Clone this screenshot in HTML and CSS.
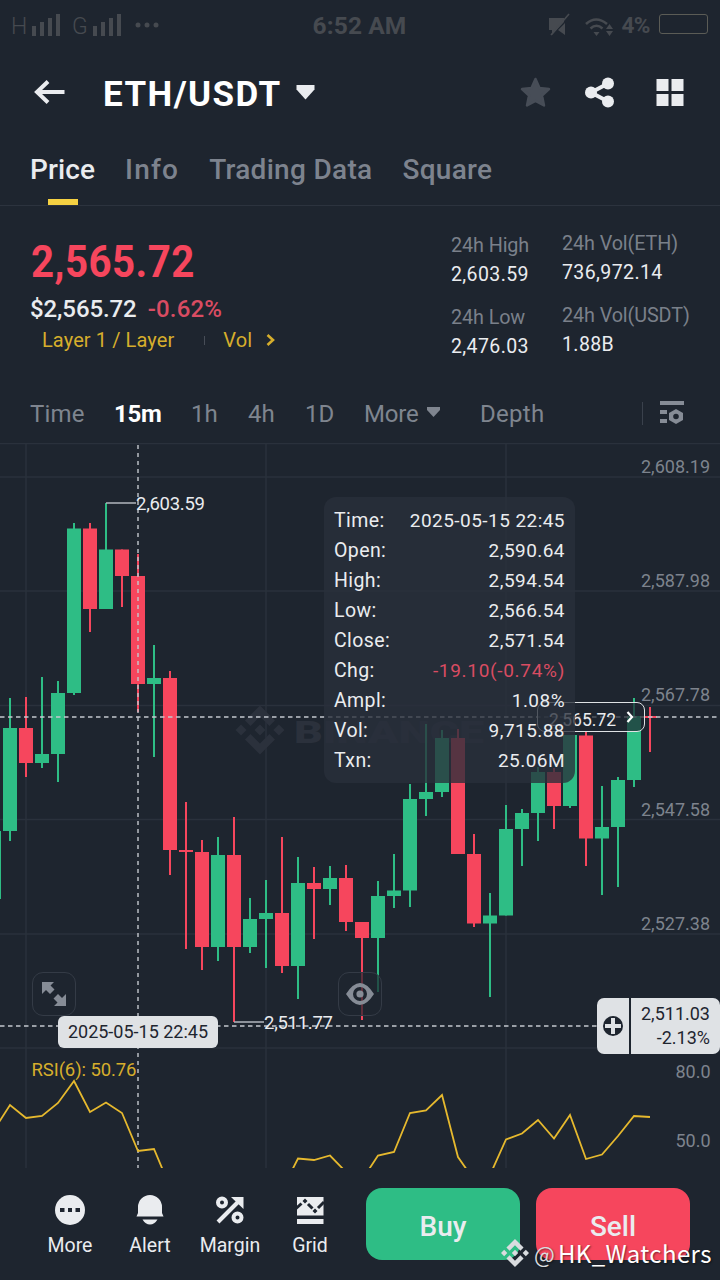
FILE: index.html
```
<!DOCTYPE html>
<html lang="en">
<head>
    <meta charset="UTF-8">
    <meta name="viewport" content="width=device-width, initial-scale=1.0">
    <title>ETH/USDT</title>
    <link rel="stylesheet" href="styles.css">
</head>
<body>
    <div class="status-bar">
        <div class="signals">
            <span class="net">H</span>
            <svg width="29" height="23" viewBox="0 0 29 23"><path d="M0 12h4v10H0zM8 8h4v14H8zM16 4h4v18h-4zM24 0h4v22h-4z"/></svg>
            <span class="net net-g">G</span>
            <svg width="29" height="23" viewBox="0 0 29 23"><path d="M0 12h4v10H0zM8 8h4v14H8zM16 4h4v18h-4zM24 0h4v22h-4z"/></svg>
            <svg class="dots" width="24" height="6" viewBox="0 0 24 6"><circle cx="3" cy="3" r="2.5"/><circle cx="12" cy="3" r="2.5"/><circle cx="21" cy="3" r="2.5"/></svg>
        </div>
        <div class="clock">6:52 AM</div>
        <div class="battery-side">
            <svg width="22" height="24" viewBox="0 0 22 24"><path d="M1 5h15v4L4 22v-5H1zM17 10v12l-7-5z"/><path d="M3 22L21 1" stroke="#464a50" stroke-width="1.6"/></svg>
            <svg class="wifi" width="29" height="22" viewBox="0 0 29 22"><g fill="none" stroke="#464a50" stroke-width="2.6"><path d="M1 8q10-9 21 0M5.500 12.500q6-5.500 12 0"/></g><path d="M8.500 16h6l-3 4zM21 13l3.500-5 3.500 5zM21 15h7l-3.500 5z"/></svg>
            <span class="percent">4%</span>
            <span class="battery"></span>
        </div>
    </div>

    <header class="header">
        <svg width="31" height="24" viewBox="0 0 31 24"><path d="M14 1.500L3 12l11 10.500M3 12h27.500" fill="none" stroke="#eaecef" stroke-width="4"/></svg>
        <h1 class="pair">ETH/USDT</h1>
        <svg class="caret" width="19" height="15" viewBox="0 0 19 15"><path d="M.5 0h18v4.500L9.500 14.500.5 4.500z" fill="#eaecef"/></svg>
        <div class="actions">
            <svg width="31" height="31" viewBox="0 0 31 31"><path d="M15.500 2l4 9 9.500 1-7 6.500 2 10-8.500-4.500L7 28.500l2-10L2 12l9.500-1z" fill="#474d57" stroke="#474d57" stroke-width="2.500" stroke-linejoin="round"/></svg>
            <svg width="30" height="31" viewBox="0 0 30 31"><g fill="#eaecef"><circle cx="6" cy="15.500" r="6"/><circle cx="23" cy="6.500" r="6"/><circle cx="23" cy="24.500" r="6"/></g><path d="M23 6.500L6 15.500l17 9" fill="none" stroke="#eaecef" stroke-width="4"/></svg>
            <svg width="28" height="27" viewBox="0 0 28 27"><path d="M.5 0h12v12H.5zM15.500 0h12v12h-12zM.5 15h12v12H.5zM15.500 15h12v12h-12z" fill="#eaecef"/></svg>
        </div>
    </header>

    <nav class="tabs">
        <span class="tab active">Price</span>
        <span class="tab info">Info</span>
        <span class="tab">Trading Data</span>
        <span class="tab">Square</span>
    </nav>

    <section class="summary">
        <div class="price-side">
            <div class="last-price">2,565.72</div>
            <div class="fiat-row"><span>$2,565.72</span><span class="change">-0.62%</span></div>
            <div class="tags">
                <span>Layer 1 / Layer</span>
                <span class="tag-line"></span>
                <span>Vol</span>
                <svg width="9" height="14" viewBox="0 0 9 14"><path d="M1.500 2L7 7l-5.500 5" fill="none" stroke="#d6ae2c" stroke-width="2.600"/></svg>
            </div>
        </div>
        <div class="stats stats-range">
            <div class="stat"><span class="stat-name">24h High</span><span class="stat-value">2,603.59</span></div>
            <div class="stat"><span class="stat-name">24h Low</span><span class="stat-value">2,476.03</span></div>
        </div>
        <div class="stats stats-vol">
            <div class="stat"><span class="stat-name">24h Vol(ETH)</span><span class="stat-value">736,972.14</span></div>
            <div class="stat"><span class="stat-name">24h Vol(USDT)</span><span class="stat-value">1.88B</span></div>
        </div>
    </section>

    <div class="intervals">
        <span class="int-time">Time</span>
        <span class="int-15 selected">15m</span>
        <span class="int-1h">1h</span>
        <span class="int-4h">4h</span>
        <span class="int-1d">1D</span>
        <span class="int-more">More <svg width="13" height="10" viewBox="0 0 13 10"><path d="M0 0h13v3L6.500 10 0 3z" fill="#7f858f"/></svg></span>
        <span class="int-depth">Depth</span>
        <div class="chart-settings">
            <svg width="24" height="25" viewBox="0 0 24 25"><path d="M0 1h24v4H0zM0 10h7v4H0zM0 19h7v4H0z" fill="#868c96"/><path d="M16 9l7 4v7l-7 4-7-4v-7zm0 4.700a2.800 2.800 0 100 5.600 2.800 2.800 0 000-5.600z" fill="#868c96" fill-rule="evenodd"/></svg>
        </div>
    </div>

    <main class="chart">
        <svg class="plot" width="720" height="725" viewBox="0 443 720 725">
            <path class="grid" d="M0 443.500H720M0 477H720M0 591H720M0 705.500H720M0 819.500H720M0 934H720M0 1048H720M26 443V1168M266 443V1168M506 443V1168"/>
            <g class="brand">
                <path transform="translate(235.500 705.500) scale(2.040)" d="M16.624 13.920l2.717 2.715-7.353 7.353-7.353-7.352 2.717-2.716 4.636 4.659 4.636-4.659zm4.637-4.637L24 12l-2.715 2.716L18.568 12l2.693-2.716zm-9.272.001l2.716 2.691-2.716 2.717L9.272 12l2.716-2.715zm-9.272-.001L5.409 12l-2.691 2.692L0 12l2.716-2.716zM11.989.011l7.353 7.329-2.717 2.715-4.636-4.636-4.636 4.660-2.717-2.715z"/>
                <text x="294" y="743" textLength="190" lengthAdjust="spacingAndGlyphs">BINANCE</text>
            </g>
            <g id="candles"></g>
            <path class="guide" d="M106 503H136M234 1022H264"/>
            <path class="cross" d="M138 445V1168" stroke-dasharray="4 4"/>
            <path class="cross" d="M0 717H720M0 1026H597" stroke-dasharray="4.500 3.500"/>
            <text class="mark" x="136" y="510" textLength="69">2,603.59</text>
            <text class="mark" x="264" y="1029" textLength="69">2,511.77</text>
            <g class="axis">
                <text x="641" y="473" textLength="69">2,608.19</text>
                <text x="641" y="587" textLength="69">2,587.98</text>
                <text x="641" y="701" textLength="69">2,567.78</text>
                <text x="641" y="816" textLength="69">2,547.58</text>
                <text x="641" y="930" textLength="69">2,527.38</text>
                <text x="675.500" y="1078" textLength="35">80.0</text>
                <text x="675.500" y="1147" textLength="35">50.0</text>
            </g>
            <polyline id="rsi" points=""/>
            <text class="rsi-name" x="31.500" y="1076" textLength="105">RSI(6): 50.76</text>
        </svg>

        <div class="last-tag"><span>2,565.72</span><svg width="8" height="12" viewBox="0 0 8 12"><path d="M1.500 1L6 6l-4.500 5" fill="none" stroke="#fff" stroke-width="2.200"/></svg></div>

        <dl class="tooltip">
            <dt>Time:</dt><dd class="when">2025-05-15 22:45</dd>
            <dt>Open:</dt><dd>2,590.64</dd>
            <dt>High:</dt><dd>2,594.54</dd>
            <dt>Low:</dt><dd>2,566.54</dd>
            <dt>Close:</dt><dd>2,571.54</dd>
            <dt>Chg:</dt><dd class="down">-19.10(-0.74%)</dd>
            <dt>Ampl:</dt><dd>1.08%</dd>
            <dt>Vol:</dt><dd>9,715.88</dd>
            <dt>Txn:</dt><dd>25.06M</dd>
        </dl>

        <div class="tool expand">
            <svg width="26" height="26" viewBox="0 0 26 26"><path d="M1 1h12L9.500 4.500l4 4-4.500 4.500-4-4L1 13zM25 25H13l3.500-3.500-4-4L17 13l4 4 4-4z" fill="#868c96"/></svg>
        </div>
        <div class="tool eye">
            <svg width="30" height="24" viewBox="0 0 30 24"><path d="M1 12Q8 1 15 1t14 11Q22 23 15 23T1 12zM15 5a7 7 0 100 14 7 7 0 000-14z" fill="#868c96" fill-rule="evenodd"/><circle cx="15" cy="12" r="3.600" fill="#868c96"/></svg>
        </div>

        <div class="time-tag">2025-05-15 22:45</div>
        <div class="price-tag">
            <div class="plus"><svg width="20" height="20" viewBox="0 0 20 20"><circle cx="10" cy="10" r="10" fill="#1e252f"/><path d="M10 2v16M2 10h16" stroke="#dfe2e5" stroke-width="4"/></svg></div>
            <div class="price-tag-text"><span>2,511.03</span><span>-2.13%</span></div>
        </div>
    </main>

    <footer class="bottom-bar">
        <div class="nav-item">
            <svg width="32" height="32" viewBox="0 0 32 32"><circle cx="16" cy="16" r="15" fill="#eaecef"/><path d="M6 14h4.500v4H6zM14 14h4v4h-4zM21.500 14H26v4h-4.500z" fill="#1e252f"/></svg>
            <span>More</span>
        </div>
        <div class="nav-item">
            <svg width="32" height="32" viewBox="0 0 32 32"><path d="M4 13a12 12 0 0124 0v6l1.500 3.500H2.500L4 19zM8.500 25.500h15q-3 5-7.500 5t-7.500-5z" fill="#eaecef"/></svg>
            <span>Alert</span>
        </div>
        <div class="nav-item">
            <svg width="32" height="32" viewBox="0 0 32 32"><g fill="none" stroke="#eaecef" stroke-width="4"><circle cx="8" cy="8.500" r="4"/><circle cx="23.500" cy="23.500" r="4"/><path d="M4 28L24 8"/></g><path d="M17 3h12.500v12z" fill="#eaecef"/></svg>
            <span>Margin</span>
        </div>
        <div class="nav-item">
            <svg width="32" height="32" viewBox="0 0 32 32"><path d="M3 3h26.500v18.500H3zM3 25h26.500v5H3z" fill="#eaecef"/><path d="M2 14.500l5.500-5M14 10l4.500 4.500M24 14l6-6" fill="none" stroke="#1e252f" stroke-width="3"/><path d="M11 4.500l2.500 2.500-2.500 2.500L8.500 7zM21 14.500l2.500 2.500-2.500 2.500-2.500-2.500z" fill="#1e252f"/></svg>
            <span>Grid</span>
        </div>
        <div class="trade buy">Buy</div>
        <div class="trade sell">Sell</div>
    </footer>

    <div class="handle">
        <svg width="28" height="28" viewBox="0 0 24 24"><path d="M16.624 13.920l2.717 2.715-7.353 7.353-7.353-7.352 2.717-2.716 4.636 4.659 4.636-4.659zm4.637-4.637L24 12l-2.715 2.716L18.568 12l2.693-2.716zm-9.272.001l2.716 2.691-2.716 2.717L9.272 12l2.716-2.715zm-9.272-.001L5.409 12l-2.691 2.692L0 12l2.716-2.716zM11.989.011l7.353 7.329-2.717 2.715-4.636-4.636-4.636 4.660-2.717-2.715z" fill="#d9dcdf"/></svg>
        <span class="at">@</span><span>HK_Watchers</span>
    </div>

    <script>
        // u = up, d = down, then body top, body bottom, wick top, wick bottom
        const candles = [
            ['u', 831, 899, 831, 899], ['u', 728, 831, 698, 841], ['d', 728, 763, 697, 777],
            ['u', 754, 763, 677, 768], ['u', 693, 754, 681, 782], ['u', 528.5, 693, 523, 695],
            ['d', 528.5, 609, 523, 632], ['u', 549.5, 609, 503, 609], ['d', 549.5, 576, 549.5, 607],
            ['d', 576, 684, 554, 712], ['u', 678, 684, 645, 757], ['d', 678, 850, 671, 875],
            ['d', 850, 852, 802, 949], ['d', 852, 947, 840, 970], ['u', 855, 947, 837, 961],
            ['d', 855, 947, 817, 1022], ['u', 919, 947, 898, 953], ['u', 913, 919, 880, 968],
            ['d', 913, 966, 837, 973], ['u', 883, 966, 857, 999], ['d', 883, 889, 867, 939],
            ['u', 878, 889, 866, 905], ['d', 878, 922, 865, 931], ['d', 922, 938, 922, 1020],
            ['u', 896, 938, 881, 992], ['u', 890.5, 896, 854, 908], ['u', 799, 890.5, 784, 907],
            ['u', 792, 799, 724, 816], ['u', 738, 792, 730, 797], ['d', 738, 854, 729, 854],
            ['d', 854, 923.5, 834, 927], ['u', 915.5, 923.5, 893, 997], ['u', 829, 915.5, 805, 915.5],
            ['u', 813, 829, 809, 866], ['u', 772, 813, 767, 841], ['d', 772, 806, 768, 829],
            ['u', 735, 806, 735, 808], ['d', 735.5, 838.5, 732, 866], ['u', 827, 838.5, 786, 895],
            ['u', 780, 827, 777, 887], ['u', 716, 780, 698, 787], ['d', 716, 718, 707, 752]
        ];
        document.getElementById('candles').innerHTML = candles.map((c, i) => {
            const x = i * 16 - 6;
            return `<g class="${c[0] === 'u' ? 'up' : 'fall'}">` +
                `<rect x="${x - 1}" y="${c[3]}" width="2" height="${c[4] - c[3]}"/>` +
                `<rect x="${x - 7}" y="${c[1]}" width="14" height="${c[2] - c[1]}"/></g>`;
        }).join('');

        // one RSI value per candle, the low ones run under the bottom bar
        const rsi = [1130, 1105, 1118, 1116, 1103, 1081, 1112, 1102.5, 1113, 1151, 1149, 1187,
            1190, 1200, 1200, 1210, 1200, 1200, 1190, 1158.5, 1160, 1155.5, 1172, 1180, 1155.5, 1152,
            1113, 1110.5, 1095, 1157, 1180, 1175, 1139.5, 1133.5, 1120, 1138.5, 1115, 1159,
            1154.5, 1136, 1116, 1117];
        document.getElementById('rsi').setAttribute('points', rsi.map((y, i) => `${i * 16 - 6},${y}`).join(' '));
    </script>
</body>
</html>
```
FILE: styles.css
```
* {
    box-sizing: border-box;
}
body {
    margin: 0;
    width: 720px;
    height: 1280px;
    overflow: hidden;
    position: relative;
    background-color: #1e252f;
    color: #eaecef;
    font-family: Roboto, "Liberation Sans", sans-serif;
}
svg {
    display: block;
    flex: none;
}

/* Status bar */
.status-bar {
    height: 50px;
    display: grid;
    grid-template-columns: 1fr auto 1fr;
    align-items: center;
    padding: 0 12px 0 11px;
    color: #464a50;
    fill: #464a50;
}
.signals {
    display: flex;
    align-items: center;
}
.net {
    width: 21px;
    font-size: 23px;
    font-weight: 300;
    padding-top: 3px;
}
.net-g {
    margin-left: 11px;
}
.dots {
    margin-left: 13px;
}
.clock {
    padding-top: 1px;
    font-size: 24.5px;
    font-weight: 700;
    letter-spacing: 0.1px;
}
.battery-side {
    display: flex;
    align-items: center;
    justify-content: flex-end;
}
.wifi {
    margin: 4px 7px 0 15px;
}
.percent {
    font-size: 22.5px;
    font-weight: 700;
    letter-spacing: -0.5px;
}
.battery {
    width: 49px;
    height: 20px;
    margin: -3px 0 0 9px;
    border: 1px solid #5b5c56;
    border-radius: 3px;
}

/* Header */
.header {
    height: 86px;
    display: flex;
    align-items: center;
    padding: 0 36px 2px 34px;
}
.pair {
    margin: 4px 14px 0 38px;
    font-size: 35px;
    font-weight: 700;
    letter-spacing: 1.4px;
    color: #fff;
}
.actions {
    display: flex;
    align-items: center;
    gap: 41px;
    margin-left: auto;
}
.actions svg:nth-child(2) {
    margin-left: -7px;
}

/* Tabs */
.tabs {
    height: 70px;
    display: flex;
    gap: 30px;
    padding-left: 30px;
    border-bottom: 1px solid #2c333e;
    font-size: 28px;
    font-weight: 500;
    letter-spacing: 0.3px;
    line-height: 67px;
    color: #7d838e;
}
.tab.active {
    position: relative;
    letter-spacing: 0.1px;
    color: #eaecef;
}
.tab.info {
    letter-spacing: 1.2px;
}
.tab.active::after {
    content: "";
    position: absolute;
    left: 18px;
    bottom: 0;
    width: 30px;
    height: 6px;
    background-color: #f5d142;
}

/* Summary */
.summary {
    height: 178px;
    display: flex;
}
.price-side {
    width: 451px;
    padding: 26px 0 0 31px;
}
.last-price {
    font-size: 45px;
    line-height: 60px;
    font-weight: 700;
    letter-spacing: 0.5px;
    color: #f6465d;
    transform: scaleX(0.895);
    transform-origin: left;
}
.fiat-row {
    display: flex;
    gap: 11px;
    margin-left: -1px;
    font-size: 24px;
    line-height: 34px;
    font-weight: 500;
    letter-spacing: -0.1px;
}
.change {
    color: #d94c62;
    letter-spacing: 0.2px;
}
.tags {
    display: flex;
    align-items: center;
    padding-left: 11px;
    font-size: 20px;
    line-height: 28px;
    letter-spacing: 0.1px;
    color: #d6ae2c;
}
.tag-line {
    width: 1px;
    height: 9px;
    margin: 0 18px 0 30px;
    background-color: #474d57;
}
.tags svg {
    margin-left: 14px;
}
.stats {
    display: flex;
    flex-direction: column;
    gap: 16px;
    padding-top: 26px;
}
.stats-range {
    width: 111px;
}
.stats-vol {
    padding-top: 24px;
}
.stat {
    display: flex;
    flex-direction: column;
    line-height: 28px;
    white-space: nowrap;
}
.stat-name {
    font-size: 19.8px;
    letter-spacing: -0.1px;
    color: #7a808a;
}
.stat-value {
    padding-top: 1px;
    margin-bottom: -1px;
    font-size: 19.5px;
    letter-spacing: 0.4px;
}

/* Intervals */
.intervals {
    height: 59px;
    display: flex;
    align-items: center;
    padding-left: 30px;
    font-size: 24px;
    color: #7f858f;
}
.intervals > span {
    flex: none;
}
.int-time {
    width: 84px;
    letter-spacing: 0.2px;
}
.int-15 {
    width: 77px;
    letter-spacing: -0.3px;
}
.int-1h {
    width: 57px;
}
.int-4h {
    width: 57px;
}
.int-1d {
    width: 59px;
}
.int-more {
    width: 116px;
    display: flex;
    align-items: center;
    gap: 9px;
    letter-spacing: -0.2px;
}
.int-more svg {
    margin-top: -4px;
}
.int-depth {
    width: 162px;
    letter-spacing: 0.3px;
}
.selected {
    color: #fff;
    font-weight: 700;
}
.chart-settings {
    padding-left: 17px;
    border-left: 1px solid #3a414c;
}
.chart-settings svg {
    margin-top: -2px;
}

/* Chart */
.chart {
    position: relative;
    height: 725px;
}
.grid {
    fill: none;
    stroke: #2a313c;
    stroke-width: 1.5;
}
.brand {
    fill: #2b313c;
    font-size: 31px;
    font-weight: 900;
}
.up {
    fill: #2ebd85;
}
.fall {
    fill: #f6465d;
}
.guide {
    stroke: #b2b7be;
    stroke-width: 1.5;
}
.cross {
    fill: none;
    stroke: #c4c8ce;
    stroke-width: 1.4;
}
.mark {
    fill: #eaecef;
    font-size: 18.5px;
}
.axis {
    fill: #7d838d;
    font-size: 18px;
}
#rsi {
    fill: none;
    stroke: #e6b92e;
    stroke-width: 1.8;
}
.rsi-name {
    fill: #d6ae2c;
    font-size: 18.5px;
}
.last-tag {
    position: absolute;
    left: 537px;
    top: 259px;
    width: 108px;
    height: 30px;
    display: flex;
    align-items: center;
    justify-content: space-between;
    padding: 5px 10px 0 11px;
    border: 1.5px solid #dfe2e5;
    border-radius: 8px;
    background-color: rgba(30, 37, 47, 0.7);
    font-size: 17.5px;
}
.last-tag svg {
    margin-top: -5px;
}
.tooltip {
    position: absolute;
    left: 324px;
    top: 54px;
    width: 251px;
    height: 286px;
    margin: 0;
    padding: 9px 10px 0;
    display: grid;
    grid-template-columns: auto 1fr;
    grid-auto-rows: 30px;
    line-height: 30px;
    border-radius: 12px;
    background-color: rgba(41, 47, 59, 0.78);
    font-size: 19.5px;
}
.tooltip dt {
    letter-spacing: 0.4px;
}
.tooltip dd {
    margin: 0;
    text-align: right;
    font-size: 19px;
    letter-spacing: 0.45px;
}
.tooltip .down {
    color: #d94c62;
    letter-spacing: 0.7px;
}
.tool {
    position: absolute;
    top: 529px;
    width: 44px;
    height: 44px;
    display: flex;
    align-items: center;
    justify-content: center;
    border: 1.5px solid #343b46;
    border-radius: 11px;
    background-color: rgba(30, 37, 47, 0.7);
}
.expand {
    left: 32px;
}
.eye {
    left: 338px;
}
.time-tag {
    position: absolute;
    left: 58px;
    top: 573px;
    width: 160px;
    height: 32px;
    border-radius: 6px;
    background-color: #dfe2e5;
    color: #1e252f;
    font-size: 18px;
    line-height: 32px;
    text-align: center;
}
.price-tag {
    position: absolute;
    left: 597px;
    top: 555px;
    width: 123px;
    height: 56px;
    display: flex;
    border-radius: 7px;
    background-color: #dfe2e5;
    color: #1e252f;
}
.plus {
    width: 34px;
    display: flex;
    align-items: center;
    padding-left: 6px;
    border-right: 2px solid #1e252f;
}
.price-tag-text {
    flex: 1;
    display: flex;
    flex-direction: column;
    align-items: flex-end;
    padding: 4px 10px 0 0;
    font-size: 18px;
    line-height: 24px;
}

/* Bottom bar */
.bottom-bar {
    height: 112px;
    display: flex;
    padding: 20px 30px;
}
.nav-item {
    width: 80px;
    display: flex;
    flex-direction: column;
    align-items: center;
    padding-top: 6px;
    font-size: 19.5px;
    line-height: 40px;
}
.trade {
    width: 154px;
    height: 72px;
    border-radius: 16px;
    font-size: 28px;
    line-height: 77px;
    font-weight: 500;
    text-align: center;
}
.buy {
    margin: 0 16px;
    background-color: #2ebd85;
}
.sell {
    background-color: #f6465d;
}
.handle {
    position: absolute;
    left: 501px;
    top: 1235px;
    height: 36px;
    display: flex;
    align-items: center;
    color: #fff;
    font: 24px/36px "Noto Sans CJK SC", sans-serif;
    letter-spacing: 0.4px;
    text-shadow: 1px 1px 2px rgba(0, 0, 0, 0.5);
}
.at {
    width: 24px;
    margin-left: 5px;
    font-size: 22px;
    color: #d9dcdf;
}
```
